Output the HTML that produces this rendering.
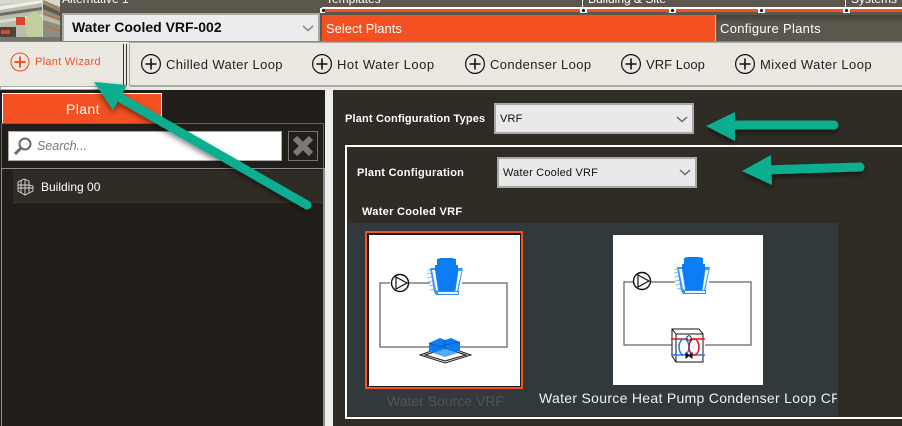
<!DOCTYPE html>
<html><head><meta charset="utf-8">
<style>
html,body{margin:0;padding:0;width:902px;height:426px;overflow:hidden;background:#221f1a;font-family:"Liberation Sans",sans-serif;}
.a{position:absolute;box-sizing:border-box;white-space:nowrap;}
.t{position:absolute;white-space:nowrap;line-height:16px;}
.combo{position:absolute;box-sizing:border-box;background:#e9e9e9;border:2px solid #a8a8a8;color:#111;font-size:11px;letter-spacing:.2px;}
.r{top:57px;color:#222;font-size:13px;letter-spacing:.38px}
.b{color:#fff;font-size:11px;font-weight:bold}
.dw{position:absolute;top:8px;width:7px;height:5px;background:#fff}
.dk{position:absolute;top:9px;width:3px;height:3px;background:#000;border-radius:50%}
</style></head>
<body>
<div class="a" style="left:0;top:0;width:902px;height:426px;overflow:hidden">
<!-- header -->
<div class="a" style="left:60px;top:0;width:842px;height:42px;background:#5c574d"></div>
<svg class="a" style="left:0;top:0" width="60" height="42" viewBox="0 0 60 42">
<rect width="60" height="42" fill="#d8d8cc"/>
<polygon points="0,5 42,0 42,40 0,40" fill="#b9bcae"/>
<polygon points="0,6 42,0 42,3 0,10" fill="#efeee6"/>
<polygon points="0,13 42,7 42,10 0,16" fill="#6f6c62"/>
<polygon points="0,20 42,14 42,17 0,23" fill="#dedcd0"/>
<rect x="16" y="17" width="9" height="8" fill="#d8442a"/>
<rect x="0" y="27" width="16" height="10" fill="#4f433c"/>
<rect x="1" y="30" width="9" height="4" fill="#c8502c"/>
<ellipse cx="34" cy="26" rx="9" ry="14" fill="#c4cf9e"/>
<polygon points="43,0 60,7 60,42 43,42" fill="#8c8f80"/>
<polygon points="43,4 60,12 60,16 43,9" fill="#5d5a50"/>
<polygon points="43,15 60,21 60,25 43,20" fill="#b9baa9"/>
<line x1="45" y1="1" x2="60" y2="10" stroke="#d8602a" stroke-width="1"/>
<line x1="45" y1="14" x2="60" y2="20" stroke="#d8602a" stroke-width="1"/>
<line x1="45" y1="26" x2="60" y2="31" stroke="#d8602a" stroke-width="1"/>
<rect x="0" y="37" width="60" height="5" fill="#77756a"/>
</svg>
<div class="t" style="left:62px;top:-9px;color:#fff;font-size:12px">Alternative 1</div>
<div class="t" style="left:326px;top:-9px;color:#fff;font-size:12px">Templates</div>
<div class="t" style="left:588px;top:-9px;color:#fff;font-size:12px">Building &amp; Site</div>
<div class="t" style="left:851px;top:-9px;color:#fff;font-size:12px">Systems</div>
<!-- step strip -->
<div class="a" style="left:322px;top:7px;width:580px;height:2px;background:#fff"></div>
<div class="a" style="left:322px;top:9px;width:580px;height:3px;background:#f45122"></div>
<div class="a" style="left:582px;top:0;width:1px;height:8px;background:#fff"></div>
<div class="a" style="left:845px;top:0;width:1px;height:8px;background:#fff"></div>
<div class="dw" style="left:320px;width:5px"></div><div class="dk" style="left:322px"></div>
<div class="dw" style="left:580px"></div><div class="dk" style="left:582px"></div>
<div class="dw" style="left:669px"></div><div class="dk" style="left:671px"></div>
<div class="dw" style="left:758px"></div><div class="dk" style="left:760px"></div>
<div class="dw" style="left:843px"></div><div class="dk" style="left:845px"></div>
<!-- alt combo -->
<div class="a" style="left:62px;top:13px;width:258px;height:29px;background:#ececec;border:2px solid #aaa9a3;border-bottom:0"></div>
<div class="t" style="left:72px;top:19px;color:#0c0c0c;font-size:14px;font-weight:bold">Water Cooled VRF-002</div>
<svg class="a" style="left:302px;top:25px" width="12" height="7"><path d="M1 1 L6 5.5 L11 1" fill="none" stroke="#8a8a8a" stroke-width="1.6"/></svg>
<!-- tabs -->
<div class="a" style="left:322px;top:15px;width:394px;height:26px;background:#f45122;border-right:1px solid #f9c8b5"></div>
<div class="t" style="left:326px;top:21px;color:#fff;font-size:13px">Select Plants</div>
<div class="a" style="left:716px;top:15px;width:186px;height:8px;background:linear-gradient(#45423a,#5c574d)"></div>
<div class="t" style="left:720px;top:21px;color:#fff;font-size:13px;letter-spacing:.3px">Configure Plants</div>
<!-- ribbon -->
<div class="a" style="left:0;top:42px;width:902px;height:45px;background:#ebe7e1"></div>
<div class="a" style="left:0;top:41px;width:902px;height:1px;background:#8a877f"></div>
<div class="a" style="left:129px;top:42px;width:773px;height:1px;background:#aaa"></div>
<div class="a" style="left:123px;top:44px;width:1px;height:41px;background:#333"></div>
<div class="a" style="left:126px;top:44px;width:1px;height:41px;background:#333"></div>
<div class="a" style="left:129px;top:42px;width:1px;height:44px;background:#aaa"></div>
<div class="a" style="left:130px;top:85px;width:772px;height:2px;background:#aaa"></div>
<div class="a" style="left:0;top:86px;width:125px;height:4px;background:#fff;border:1px solid #aaa"></div>
<div class="a" style="left:125px;top:87px;width:777px;height:3px;background:#ebe7e1"></div>
<svg class="a" style="left:10px;top:52px" width="20" height="20"><circle cx="10" cy="10" r="9" fill="none" stroke="#f45122" stroke-width="1.1"/><path d="M10 4.5V15.5M4.5 10H15.5" stroke="#f45122" stroke-width="2"/></svg>
<div class="t" style="left:35px;top:54px;color:#f45122;font-size:11px;letter-spacing:.3px">Plant Wizard</div>
<svg class="a" style="left:0;top:0" width="902" height="90" fill="none">
<g stroke="#111">
<circle cx="151" cy="64" r="9.4" stroke-width="1.2"/><path d="M151 58.5V69.5M145.5 64H156.5" stroke-width="1.6"/>
<circle cx="322" cy="64" r="9.4" stroke-width="1.2"/><path d="M322 58.5V69.5M316.5 64H327.5" stroke-width="1.6"/>
<circle cx="475" cy="64" r="9.4" stroke-width="1.2"/><path d="M475 58.5V69.5M469.5 64H480.5" stroke-width="1.6"/>
<circle cx="631" cy="64" r="9.4" stroke-width="1.2"/><path d="M631 58.5V69.5M625.5 64H636.5" stroke-width="1.6"/>
<circle cx="745" cy="64" r="9.4" stroke-width="1.2"/><path d="M745 58.5V69.5M739.5 64H750.5" stroke-width="1.6"/>
</g></svg>
<div class="t r" style="left:166px">Chilled Water Loop</div>
<div class="t r" style="left:337px;letter-spacing:.5px">Hot Water Loop</div>
<div class="t r" style="left:490px">Condenser Loop</div>
<div class="t r" style="left:646px;letter-spacing:.05px">VRF Loop</div>
<div class="t r" style="left:760px;letter-spacing:.44px">Mixed Water Loop</div>
<!-- left panel -->
<div class="a" style="left:0;top:90px;width:325px;height:336px;background:#221f1a"></div>
<div class="a" style="left:325px;top:90px;width:8px;height:336px;background:#eeeeee"></div>
<div class="a" style="left:333px;top:90px;width:569px;height:336px;background:#2f2c26"></div>
<div class="a" style="left:2px;top:93px;width:160px;height:30px;background:#f45122;border:1px solid #fff;border-bottom:0"></div>
<div class="t" style="left:66px;top:101px;color:#fff;font-size:14px;letter-spacing:.4px">Plant</div>
<div class="a" style="left:1px;top:123px;width:323px;height:45px;border:1px solid #66635d;border-bottom:0"></div>
<div class="a" style="left:8px;top:131px;width:274px;height:30px;background:#fff;border:1px solid #aaa"></div>
<svg class="a" style="left:12px;top:135px" width="22" height="22" fill="none" stroke="#6a6a6a"><circle cx="13" cy="9" r="5.5" stroke-width="2"/><path d="M9 13L3 19" stroke-width="3"/></svg>
<div class="t" style="left:37px;top:138px;color:#777;font-size:12.5px;font-style:italic">Search...</div>
<div class="a" style="left:288px;top:131px;width:30px;height:30px;border:1px solid #77746e"></div>
<svg class="a" style="left:292px;top:135px" width="22" height="22"><path d="M3 3L19 19M19 3L3 19" stroke="#7a7a7a" stroke-width="6"/></svg>
<div class="a" style="left:1px;top:168px;width:324px;height:258px;border:1px solid #8d8d8d;border-bottom:0;border-right-width:2px"></div>
<div class="a" style="left:13px;top:170px;width:310px;height:33px;background:#2f2c26;border-bottom:1px solid #3a3731"></div>
<svg class="a" style="left:16px;top:177px" width="18" height="19" fill="none" stroke="#ddd" stroke-width=".9"><path d="M2 5L8 2L13 4V8L17 9V14L9 18L2 14Z"/><path d="M5 3.5V16M9 2V18M13 4V16M2 8L13 8M2 11L17 11"/></svg>
<div class="t" style="left:41px;top:179px;color:#fff;font-size:12px">Building 00</div>
<!-- right panel -->
<div class="t b" style="left:345px;top:111px;letter-spacing:.17px">Plant Configuration Types</div>
<div class="combo" style="left:494px;top:103px;width:200px;height:31px;padding:6px 0 0 4px;line-height:16px">VRF</div>
<svg class="a" style="left:676px;top:116px" width="12" height="7"><path d="M1 1 L6 5.5 L11 1" fill="none" stroke="#6a6a6a" stroke-width="1.5"/></svg>
<div class="a" style="left:345px;top:145px;width:560px;height:274px;border:2px solid #fff"></div>
<div class="t b" style="left:357px;top:165px;letter-spacing:.27px">Plant Configuration</div>
<div class="combo" style="left:497px;top:157px;width:200px;height:31px;padding:6px 0 0 4px;line-height:16px">Water Cooled VRF</div>
<svg class="a" style="left:679px;top:169px" width="12" height="7"><path d="M1 1 L6 5.5 L11 1" fill="none" stroke="#6a6a6a" stroke-width="1.5"/></svg>
<div class="t b" style="left:362px;top:204px;letter-spacing:.3px">Water Cooled VRF</div>
<div class="a" style="left:348px;top:223px;width:490px;height:193px;background:#32393d"></div>
<!-- card 1 -->
<div class="a" style="left:365px;top:231px;width:158px;height:158px;border:2px solid #f45122;background:#1c1c1c"></div>
<div class="a" style="left:369px;top:235px;width:151px;height:151px;background:#fff"></div>
<!-- card 2 -->
<div class="a" style="left:613px;top:235px;width:150px;height:150px;background:#fff"></div>
<svg class="a" style="left:0;top:0" width="902" height="426" fill="none">
<defs>
<filter id="s" x="-20%" y="-20%" width="140%" height="140%"><feDropShadow dx="0" dy="3" stdDeviation="3" flood-color="#000" flood-opacity=".5"/></filter>
<g id="tower">
<path d="M428 271L431 269M427 274L431 273M427.5 278L432 277M428 282L433 281M429 286L434 285M430 290L435 289" stroke="#7dbcf8" stroke-width="1"/>
<path d="M437 259L441 258H452L456 259V265H437Z" fill="#0a7df5"/>
<path d="M430 268H463L458 293L456 295H436L434 292Z" fill="#3c97f7"/>
<path d="M435 265H458V270L455 291H439L435 270Z" fill="#0a7df5"/>
<path d="M432 270L435 270L438 291L436 290Z" fill="#fff"/>
<path d="M458.5 271L461.5 271L457 291L455.5 291Z" fill="#fff"/>
<rect x="437.5" y="291.5" width="21" height="3" fill="#eaf4ff" stroke="#2f8ef5" stroke-width="1"/>
</g>
</defs>
<!-- loop 1 -->
<path d="M390 283H380V347H507V283H462M408 283H430" stroke="#666" stroke-width="1.3"/>
<circle cx="400" cy="283" r="8.5" stroke="#111" stroke-width="1.4" fill="#fff"/><path d="M396 277L407 283L396 289Z" stroke="#111" stroke-width="1.2"/>
<use href="#tower"/>
<path d="M420 355L445 346L471 355L445 363Z" fill="#fff" stroke="#222" stroke-width="1"/>
<path d="M425 355L445 348L466 355L445 361Z" stroke="#333" stroke-width="1.2"/>
<path d="M429 343L440 338L445 340L451 338L460 342V350L445 356L429 351Z" fill="#0a7df5"/>
<path d="M445 340V351M429 343L440 347L445 345L460 342" stroke="#0a4ea8" stroke-width=".8"/>
<path d="M433 353L445 349L458 353L445 357Z" fill="#55aaf7"/>
<!-- loop 2 -->
<path d="M633 282H624V345H672M705 345H751V282H709M651 282H675" stroke="#666" stroke-width="1.3"/>
<circle cx="642" cy="281" r="8.5" stroke="#111" stroke-width="1.4" fill="#fff"/><path d="M638 275L649 281L638 287Z" stroke="#111" stroke-width="1.2"/>
<use href="#tower" transform="translate(247,-1)"/>
<path d="M672 329H699L703 334V362H676L672 356Z" fill="#fff" stroke="#111" stroke-width="1"/>
<path d="M672 329L676 334V362M676 334H703" stroke="#111" stroke-width="1"/>
<path d="M671 339H705" stroke="#e8101a" stroke-width="1.4"/>
<path d="M671 355H705" stroke="#1a7df0" stroke-width="1.4"/>
<ellipse cx="684" cy="347" rx="5" ry="8" stroke="#1a7df0" stroke-width="1.5"/>
<ellipse cx="694" cy="347" rx="5" ry="8" stroke="#e8101a" stroke-width="1.5"/>
<circle cx="689" cy="338" r="2.2" fill="#fff" stroke="#111"/>
<path d="M686 353L692 358V353L686 358Z" fill="#111" stroke="#111"/>
</svg>
<div class="t" style="left:387px;top:393px;color:#56544e;font-size:14px">Water Source VRF</div>
<div class="a" style="left:530px;top:389px;width:307px;height:18px;overflow:hidden"><div class="t" style="left:9px;top:1px;color:#f0f0f0;font-size:14px;letter-spacing:.3px">Water Source Heat Pump Condenser Loop CFlow</div></div>
<!-- arrows -->
<svg class="a" style="left:0;top:0" width="902" height="426" fill="none">
<g filter="url(#s)">
<path d="M307 205L117 96" stroke="#07ae8f" stroke-width="9" stroke-linecap="round"/>
<path d="M94 82L127 85L113 110Z" fill="#07ae8f"/>
<path d="M834 125H728" stroke="#07ae8f" stroke-width="9" stroke-linecap="round"/>
<path d="M706 126L735 112V141Z" fill="#07ae8f"/>
<path d="M860 167L765 170" stroke="#07ae8f" stroke-width="9" stroke-linecap="round"/>
<path d="M742 171L771 155L772 185Z" fill="#07ae8f"/>
</g>
</svg>
</div>
</body></html>
